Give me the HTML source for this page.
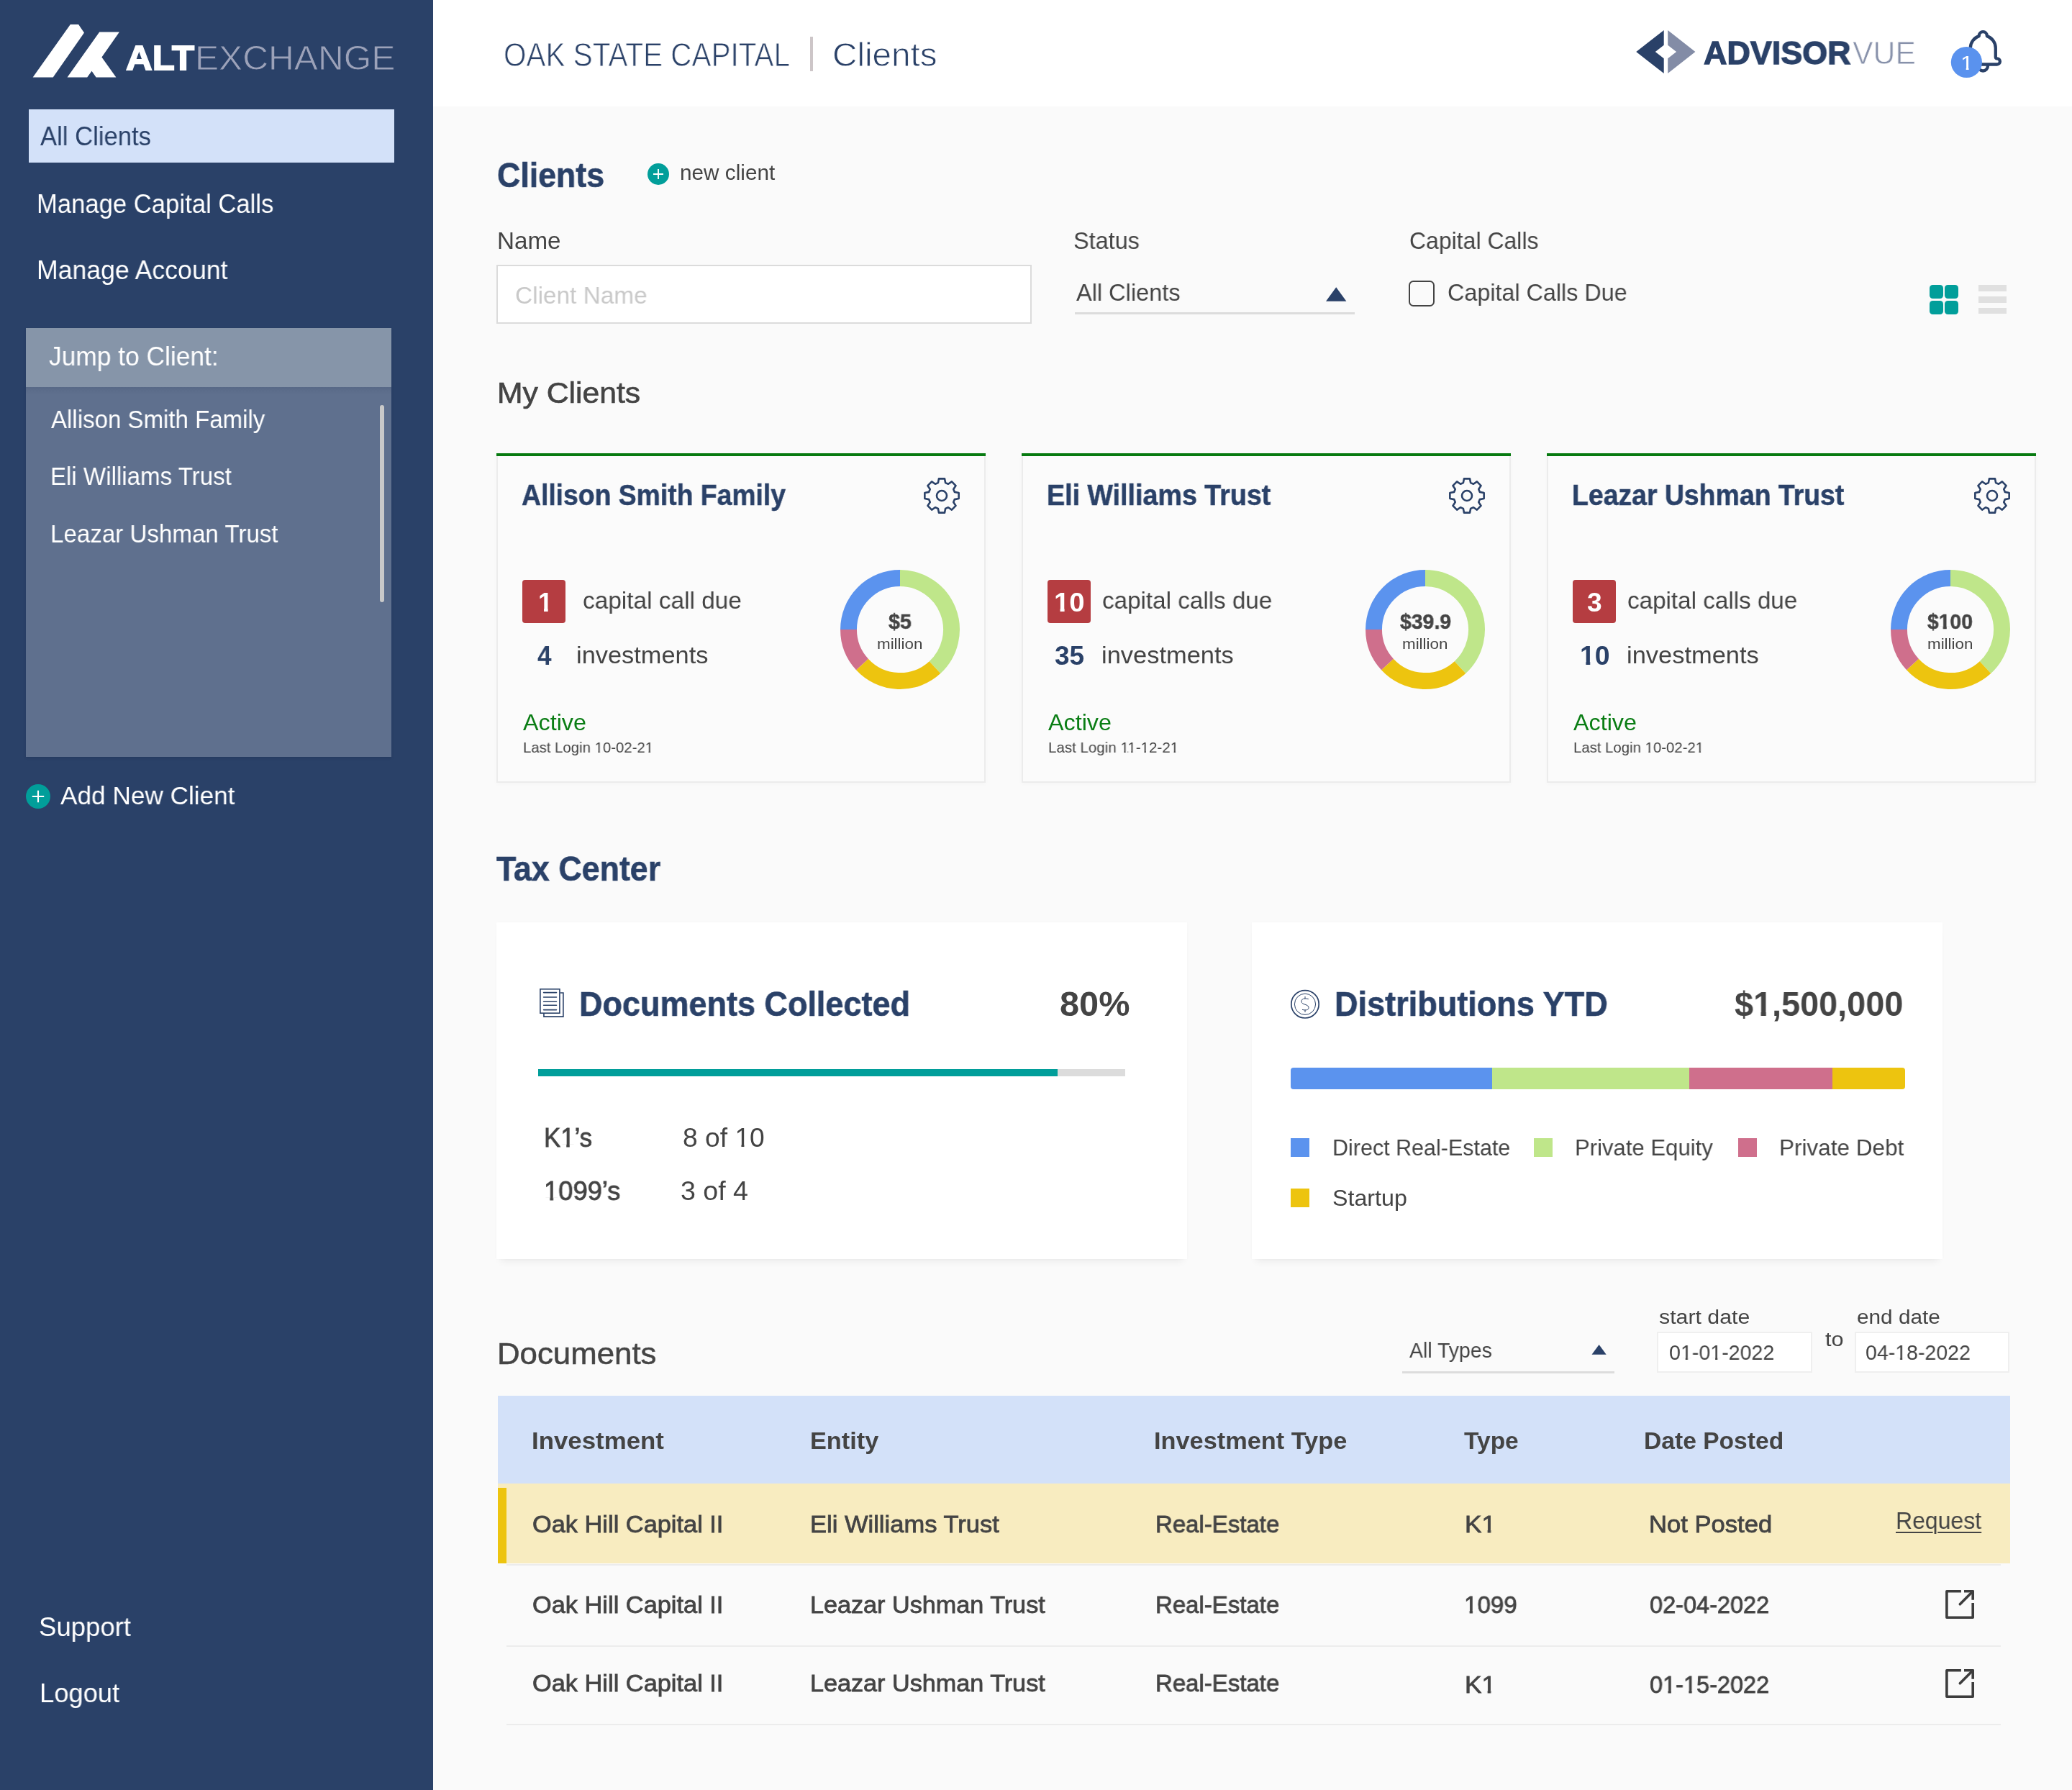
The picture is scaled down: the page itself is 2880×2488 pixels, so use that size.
<!DOCTYPE html>
<html lang="en"><head><meta charset="utf-8"><title>AltExchange AdvisorVue - Clients</title>
<style>
*{margin:0;padding:0;box-sizing:border-box}
html,body{width:2880px;height:2488px;overflow:hidden}
body{position:relative;background:#fafafa;font-family:"Liberation Sans",sans-serif;color:#444}
body div,body svg,.t{position:absolute}
.t{white-space:nowrap;line-height:1;transform-origin:0 0;display:block;will-change:transform}
</style></head>
<body>
<div style="left:0px;top:0px;width:602px;height:2488px;background:#2a4168;"></div>
<div style="left:602px;top:0px;width:2278px;height:148px;background:#ffffff;"></div>
<svg style="left:0;top:0" width="602" height="130" viewBox="0 0 602 130"><polygon fill="#fff" points="45.6,107.6 97.8,34.1 109.1,34.1 117,45.4 73.7,107.6"/><polygon fill="#fff" points="93.5,107.6 138.2,44.4 165.9,44.4 141.4,79.6 161.4,107.6 133.6,107.6 127.5,98.8 121.2,107.6"/></svg>
<div style="left:40px;top:152px;width:508px;height:74px;background:#d3e1f9;"></div>
<div style="left:36px;top:456px;width:508px;height:595.8px;background:transparent;box-shadow:0 2px 4px rgba(10,20,45,.11)"></div>
<div style="left:36px;top:456px;width:508px;height:82px;background:#8695a9;"></div>
<div style="left:36px;top:538px;width:508px;height:513.8px;background:#5f708e;"></div>
<div style="left:36px;top:538px;width:508px;height:10px;background:transparent;background:linear-gradient(rgba(40,55,85,.12),rgba(40,55,85,0))"></div>
<div style="left:528px;top:563px;width:6px;height:274px;background:#c9c9c9;border-radius:3px"></div>
<svg style="left:36px;top:1090px" width="34" height="34" viewBox="0 0 34 34"><circle cx="17" cy="17" r="17" fill="#019e9a"/><path d="M17 8.8V25.2M8.8 17H25.2" stroke="#fff" stroke-width="2.1" fill="none"/></svg>
<div style="left:1126px;top:51px;width:4px;height:48px;background:#cdc6c8;"></div>
<svg style="left:2270px;top:38px" width="92" height="68" viewBox="2270 38 92 68"><polygon fill="#2a4168" points="2274.2,72 2312.7,41.9 2312.7,62.7 2300.8,72 2312.7,81.3 2312.7,102.1"/><polygon fill="#838ca6" points="2318.2,41.9 2356.4,72 2318.2,102.1 2318.2,81.3 2330.1,72 2318.2,62.7"/></svg>
<svg style="left:2700px;top:30px" width="100" height="90" viewBox="2700 30 100 90"><g fill="none" stroke="#2a4168" stroke-width="4.3" stroke-linejoin="round" stroke-linecap="round"><path d="M2738.8,79 V66.7 A17.5,17.5 0 0 1 2750.8,50.1 V49.6 A5.5,5.5 0 0 1 2761.8,49.6 V50.1 A17.5,17.5 0 0 1 2773.8,66.7 V79 Q2773.8,81.3 2775.8,81.3 A4.1,4.1 0 0 1 2775.8,89.5 H2736.8 A4.1,4.1 0 0 1 2736.8,81.3 Q2738.8,81.3 2738.8,79 Z"/><path d="M2749.7,91.9 A6.6,6.6 0 0 0 2762.9,91.9"/></g><circle cx="2733.4" cy="86.5" r="21.6" fill="#5a92ee"/></svg>
<svg style="left:900px;top:226.5px" width="30" height="30" viewBox="0 0 30 30"><circle cx="15" cy="15" r="15" fill="#019e9a"/><path d="M15 8V22M8 15H22" stroke="#fff" stroke-width="1.9" fill="none"/></svg>
<div style="left:690px;top:368px;width:744px;height:82px;background:#ffffff;border:2px solid #dbdbdb"></div>
<div style="left:1494px;top:434px;width:389px;height:3px;background:#dcdcdc;"></div>
<svg style="left:1840px;top:396px" width="36" height="26" viewBox="1840 396 36 26"><polygon fill="#2a4168" points="1843,418.8 1871.4,418.8 1857.2,399.3"/></svg>
<div style="left:1958.2px;top:390.2px;width:35.5px;height:35.5px;background:transparent;border:2.1px solid #444;border-radius:6.5px"></div>
<div style="left:2682px;top:396px;width:19px;height:19px;background:#019e9a;border-radius:4.5px"></div>
<div style="left:2703.3px;top:396px;width:19px;height:19px;background:#019e9a;border-radius:4.5px"></div>
<div style="left:2682px;top:417.6px;width:19px;height:19px;background:#019e9a;border-radius:4.5px"></div>
<div style="left:2703.3px;top:417.6px;width:19px;height:19px;background:#019e9a;border-radius:4.5px"></div>
<div style="left:2749.6px;top:396.4px;width:39.8px;height:8.8px;background:#e0e0e0;"></div>
<div style="left:2749.6px;top:412px;width:39.8px;height:8.8px;background:#e0e0e0;"></div>
<div style="left:2749.6px;top:427.7px;width:39.8px;height:8.8px;background:#e0e0e0;"></div>
<div style="left:690px;top:632px;width:680px;height:456px;background:#fbfbfb;border:2px solid #ececec;box-shadow:0 2px 6px rgba(0,0,0,.025)"></div>
<div style="left:690px;top:630px;width:680px;height:4.4px;background:#077a10;"></div>
<svg style="left:1279px;top:659px" width="60" height="60" viewBox="1279 659 60 60"><g fill="none" stroke="#2a4168" stroke-width="2.6" stroke-linejoin="round"><polygon points="1303.90,671.11 1305.00,665.34 1313.00,665.34 1314.10,671.11 1318.05,672.75 1322.90,669.44 1328.56,675.10 1325.25,679.95 1326.89,683.90 1332.66,685.00 1332.66,693.00 1326.89,694.10 1325.25,698.05 1328.56,702.90 1322.90,708.56 1318.05,705.25 1314.10,706.89 1313.00,712.66 1305.00,712.66 1303.90,706.89 1299.95,705.25 1295.10,708.56 1289.44,702.90 1292.75,698.05 1291.11,694.10 1285.34,693.00 1285.34,685.00 1291.11,683.90 1292.75,679.95 1289.44,675.10 1295.10,669.44 1299.95,672.75"/><circle cx="1309" cy="689" r="7"/></g></svg>
<div style="left:726px;top:806px;width:60px;height:60px;background:#b53d41;border-radius:4px"></div>
<svg style="left:1161px;top:784.8px" width="180" height="180" viewBox="1161 784.8 180 180"><path d="M1251.00,803.30 A71.5,71.5 0 0 1 1299.49,927.35" stroke="#bfe68a" stroke-width="22.9" fill="none"/><path d="M1299.49,927.35 A71.5,71.5 0 0 1 1198.45,923.29" stroke="#edc40f" stroke-width="22.9" fill="none"/><path d="M1198.45,923.29 A71.5,71.5 0 0 1 1179.50,874.80" stroke="#cf6f8c" stroke-width="22.9" fill="none"/><path d="M1179.50,874.80 A71.5,71.5 0 0 1 1251.00,803.30" stroke="#5b93ee" stroke-width="22.9" fill="none"/></svg>
<div style="left:1420px;top:632px;width:680px;height:456px;background:#fbfbfb;border:2px solid #ececec;box-shadow:0 2px 6px rgba(0,0,0,.025)"></div>
<div style="left:1420px;top:630px;width:680px;height:4.4px;background:#077a10;"></div>
<svg style="left:2009px;top:659px" width="60" height="60" viewBox="2009 659 60 60"><g fill="none" stroke="#2a4168" stroke-width="2.6" stroke-linejoin="round"><polygon points="2033.90,671.11 2035.00,665.34 2043.00,665.34 2044.10,671.11 2048.05,672.75 2052.90,669.44 2058.56,675.10 2055.25,679.95 2056.89,683.90 2062.66,685.00 2062.66,693.00 2056.89,694.10 2055.25,698.05 2058.56,702.90 2052.90,708.56 2048.05,705.25 2044.10,706.89 2043.00,712.66 2035.00,712.66 2033.90,706.89 2029.95,705.25 2025.10,708.56 2019.44,702.90 2022.75,698.05 2021.11,694.10 2015.34,693.00 2015.34,685.00 2021.11,683.90 2022.75,679.95 2019.44,675.10 2025.10,669.44 2029.95,672.75"/><circle cx="2039" cy="689" r="7"/></g></svg>
<div style="left:1456px;top:806px;width:60px;height:60px;background:#b53d41;border-radius:4px"></div>
<svg style="left:1891px;top:784.8px" width="180" height="180" viewBox="1891 784.8 180 180"><path d="M1981.00,803.30 A71.5,71.5 0 0 1 2029.49,927.35" stroke="#bfe68a" stroke-width="22.9" fill="none"/><path d="M2029.49,927.35 A71.5,71.5 0 0 1 1928.45,923.29" stroke="#edc40f" stroke-width="22.9" fill="none"/><path d="M1928.45,923.29 A71.5,71.5 0 0 1 1909.50,874.80" stroke="#cf6f8c" stroke-width="22.9" fill="none"/><path d="M1909.50,874.80 A71.5,71.5 0 0 1 1981.00,803.30" stroke="#5b93ee" stroke-width="22.9" fill="none"/></svg>
<div style="left:2150px;top:632px;width:680px;height:456px;background:#fbfbfb;border:2px solid #ececec;box-shadow:0 2px 6px rgba(0,0,0,.025)"></div>
<div style="left:2150px;top:630px;width:680px;height:4.4px;background:#077a10;"></div>
<svg style="left:2739px;top:659px" width="60" height="60" viewBox="2739 659 60 60"><g fill="none" stroke="#2a4168" stroke-width="2.6" stroke-linejoin="round"><polygon points="2763.90,671.11 2765.00,665.34 2773.00,665.34 2774.10,671.11 2778.05,672.75 2782.90,669.44 2788.56,675.10 2785.25,679.95 2786.89,683.90 2792.66,685.00 2792.66,693.00 2786.89,694.10 2785.25,698.05 2788.56,702.90 2782.90,708.56 2778.05,705.25 2774.10,706.89 2773.00,712.66 2765.00,712.66 2763.90,706.89 2759.95,705.25 2755.10,708.56 2749.44,702.90 2752.75,698.05 2751.11,694.10 2745.34,693.00 2745.34,685.00 2751.11,683.90 2752.75,679.95 2749.44,675.10 2755.10,669.44 2759.95,672.75"/><circle cx="2769" cy="689" r="7"/></g></svg>
<div style="left:2186px;top:806px;width:60px;height:60px;background:#b53d41;border-radius:4px"></div>
<svg style="left:2621px;top:784.8px" width="180" height="180" viewBox="2621 784.8 180 180"><path d="M2711.00,803.30 A71.5,71.5 0 0 1 2759.49,927.35" stroke="#bfe68a" stroke-width="22.9" fill="none"/><path d="M2759.49,927.35 A71.5,71.5 0 0 1 2658.45,923.29" stroke="#edc40f" stroke-width="22.9" fill="none"/><path d="M2658.45,923.29 A71.5,71.5 0 0 1 2639.50,874.80" stroke="#cf6f8c" stroke-width="22.9" fill="none"/><path d="M2639.50,874.80 A71.5,71.5 0 0 1 2711.00,803.30" stroke="#5b93ee" stroke-width="22.9" fill="none"/></svg>
<div style="left:690px;top:1282px;width:960px;height:468px;background:#ffffff;box-shadow:0 9px 10px -6px rgba(0,0,0,.065),0 0 4px rgba(0,0,0,.02)"></div>
<div style="left:1740px;top:1282px;width:960px;height:468px;background:#ffffff;box-shadow:0 9px 10px -6px rgba(0,0,0,.065),0 0 4px rgba(0,0,0,.02)"></div>
<svg style="left:745px;top:1370px" width="44" height="48" viewBox="745 1370 44 48"><g fill="none" stroke="#2a4168" stroke-width="1.6"><rect x="750.9" y="1374.8" width="27" height="33.4"/><path d="M778.7,1380 H782.9 V1413.1 H755.95 V1409"/><path stroke-linecap="round" d="M755.6,1379.6H773.5M755.6,1386H773.5M755.6,1392.3H773.5M755.6,1397.2H773.5M755.6,1403.6H773.5"/></g></svg>
<div style="left:747.8px;top:1485.8px;width:816.2px;height:10px;background:#dcdcdc;"></div>
<div style="left:747.8px;top:1485.8px;width:721.8px;height:10px;background:#019e9a;"></div>
<svg style="left:1790px;top:1372px" width="48" height="48" viewBox="1790 1372 48 48"><g fill="none" stroke="#2a4168"><circle cx="1814" cy="1395.8" r="19.2" stroke-width="1.7"/><circle cx="1814" cy="1395.8" r="14.6" stroke-width="1"/><path stroke-width="1" d="M1814,1385V1388.3M1814,1403.6V1407M1818.8,1388.6C1812,1387 1809,1388.8 1809,1391.8C1809,1394.6 1811.5,1395.4 1814,1396.2C1817,1397.2 1819,1398.3 1819,1400.6C1819,1403.8 1815.5,1404.6 1810,1403.4"/></g></svg>
<div style="left:1794px;top:1484px;width:854px;height:29.5px;border-radius:4px;overflow:hidden;background:linear-gradient(90deg,#5b93ee 0,#5b93ee 280px,#bfe68a 280px,#bfe68a 553.5px,#cf6f8c 553.5px,#cf6f8c 753px,#edc40f 753px)"></div>
<div style="left:1794px;top:1581.8px;width:26px;height:26px;background:#5b93ee;"></div>
<div style="left:2132px;top:1581.8px;width:26px;height:26px;background:#bfe68a;"></div>
<div style="left:2416px;top:1581.8px;width:26px;height:26px;background:#cf6f8c;"></div>
<div style="left:1794px;top:1652px;width:26px;height:26px;background:#edc40f;"></div>
<div style="left:1949px;top:1906.3px;width:295px;height:2.8px;background:#dcdcdc;"></div>
<svg style="left:2208px;top:1864px" width="30" height="24" viewBox="2208 1864 30 24"><polygon fill="#2a4168" points="2212.5,1882.8 2232.7,1882.8 2222.6,1868.9"/></svg>
<div style="left:2303.4px;top:1851.4px;width:215.6px;height:57px;background:#ffffff;border:2px solid #efefef"></div>
<div style="left:2577.8px;top:1851.4px;width:215.6px;height:57px;background:#ffffff;border:2px solid #efefef"></div>
<div style="left:692px;top:1940px;width:2102px;height:122px;background:#d3e1f9;"></div>
<div style="left:692px;top:2062px;width:2102px;height:111px;background:#f8ecc0;"></div>
<div style="left:692px;top:2068px;width:12px;height:105px;background:#edc40f;"></div>
<div style="left:704px;top:2174px;width:2077px;height:2px;background:#ececec;"></div>
<div style="left:704px;top:2286.6px;width:2077px;height:2px;background:#ececec;"></div>
<div style="left:704px;top:2396.3px;width:2077px;height:2px;background:#ececec;"></div>
<svg style="left:2700px;top:2205.9px" width="48" height="48" viewBox="2700 2205.9 48 48"><g fill="none" stroke="#3d3d3d" stroke-width="3.6"><path stroke-linejoin="round" d="M2725.9,2211.7000000000003H2705.9V2248.1H2742.2V2227.9"/><path stroke-linejoin="round" d="M2730,2211.7000000000003H2742.2V2223.7000000000003"/><path stroke-linecap="round" d="M2742.2,2211.7000000000003L2724.3,2229.7000000000003"/></g></svg>
<svg style="left:2700px;top:2315.5px" width="48" height="48" viewBox="2700 2315.5 48 48"><g fill="none" stroke="#3d3d3d" stroke-width="3.6"><path stroke-linejoin="round" d="M2725.9,2321.3H2705.9V2357.7H2742.2V2337.5"/><path stroke-linejoin="round" d="M2730,2321.3H2742.2V2333.3"/><path stroke-linecap="round" d="M2742.2,2321.3L2724.3,2339.3"/></g></svg>
<span class="t" style="left:174.55px;top:55.90px;font-size:49px;color:#ffffff;font-weight:700;-webkit-text-stroke:1.8px #ffffff;transform:scale(1.0369,1);">ALT</span>
<span class="t" style="left:271.35px;top:55.90px;font-size:49px;color:#9ca2b9;-webkit-text-stroke:0.8px #2a4168;transform:scale(1.0122,1);">EXCHANGE</span>
<span class="t" style="left:55.60px;top:171.80px;font-size:36px;color:#2a4168;transform:scale(0.9620,1);">All Clients</span>
<span class="t" style="left:50.67px;top:266.00px;font-size:36px;color:#ffffff;transform:scale(0.9623,1);">Manage Capital Calls</span>
<span class="t" style="left:50.61px;top:358.40px;font-size:36px;color:#ffffff;transform:scale(0.9898,1);">Manage Account</span>
<span class="t" style="left:67.60px;top:478.30px;font-size:36px;color:#ffffff;transform:scale(0.9819,1);">Jump to Client:</span>
<span class="t" style="left:70.60px;top:564.50px;font-size:35px;color:#ffffff;transform:scale(0.9437,1);">Allison Smith Family</span>
<span class="t" style="left:69.71px;top:644.30px;font-size:35px;color:#ffffff;transform:scale(0.9453,1);">Eli Williams Trust</span>
<span class="t" style="left:69.71px;top:724.40px;font-size:35px;color:#ffffff;transform:scale(0.9463,1);">Leazar Ushman Trust</span>
<span class="t" style="left:84.00px;top:1088.90px;font-size:35.6px;color:#ffffff;transform:scale(0.9889,1);">Add New Client</span>
<span class="t" style="left:54.40px;top:2244.20px;font-size:36.7px;color:#ffffff;transform:scale(0.9961,1);">Support</span>
<span class="t" style="left:54.83px;top:2336.10px;font-size:36.7px;color:#ffffff;transform:scale(0.9907,1);">Logout</span>
<span class="t" style="left:700.08px;top:51.80px;font-size:47px;color:#2a4168;-webkit-text-stroke:0.9px #ffffff;transform:scale(0.8608,1);">OAK STATE CAPITAL</span>
<span class="t" style="left:1157.17px;top:51.80px;font-size:47px;color:#2a4168;-webkit-text-stroke:0.9px #ffffff;transform:scale(1.0132,1);">Clients</span>
<span class="t" style="left:2368.00px;top:51.30px;font-size:45px;color:#2a4168;font-weight:700;-webkit-text-stroke:1.3px #2a4168;transform:scale(0.9975,1);">ADVISOR</span>
<span class="t" style="left:2574.60px;top:51.30px;font-size:45px;color:#8791aa;-webkit-text-stroke:0.8px #ffffff;transform:scale(0.9507,1);">VUE</span>
<span class="t" style="left:2725.00px;top:74.90px;font-size:27px;color:#ffffff;clip-path:polygon(-4.00px -4.00px,19.03px -4.00px,19.03px 29.00px,15.02px 29.00px,15.02px 19.48px,9.53px 19.48px,9.53px 29.00px,6.44px 29.00px,6.44px 19.48px,0.00px 19.48px,0.00px 29.00px,-4.00px 29.00px);transform:scale(1.2000,1);">1</span>
<span class="t" style="left:690.96px;top:219.40px;font-size:48.7px;color:#2a4168;font-weight:700;-webkit-text-stroke:0.7px #2a4168;transform:scale(0.9181,1);">Clients</span>
<span class="t" style="left:945.36px;top:225.70px;font-size:28.8px;color:#444444;transform:scale(1.0327,1);">new client</span>
<span class="t" style="left:690.59px;top:317.70px;font-size:33px;color:#444444;transform:scale(1.0063,1);">Name</span>
<span class="t" style="left:715.60px;top:394.00px;font-size:33.5px;color:#c9c9c9;transform:scale(0.9963,1);">Client Name</span>
<span class="t" style="left:1491.82px;top:318.20px;font-size:33px;color:#444444;transform:scale(0.9821,1);">Status</span>
<span class="t" style="left:1496.40px;top:390.20px;font-size:33.2px;color:#444444;transform:scale(0.9799,1);">All Clients</span>
<span class="t" style="left:1958.83px;top:318.00px;font-size:33px;color:#444444;transform:scale(0.9688,1);">Capital Calls</span>
<span class="t" style="left:2012.43px;top:389.80px;font-size:33.2px;color:#444444;transform:scale(0.9735,1);">Capital Calls Due</span>
<span class="t" style="left:690.70px;top:525.70px;font-size:41.3px;color:#444444;-webkit-text-stroke:0.7px #444444;transform:scale(1.0333,1);">My Clients</span>
<span class="t" style="left:724.88px;top:668.00px;font-size:40.4px;color:#2a4168;font-weight:700;-webkit-text-stroke:0.5px #2a4168;transform:scale(0.9239,1);">Allison Smith Family</span>
<span class="t" style="left:747.60px;top:819.60px;font-size:36px;color:#ffffff;font-weight:700;clip-path:polygon(-4.00px -4.00px,24.03px -4.00px,24.03px 38.00px,20.02px 38.00px,20.02px 25.83px,13.69px 25.83px,13.69px 38.00px,8.05px 38.00px,8.05px 25.83px,0.00px 25.83px,0.00px 38.00px,-4.00px 38.00px);">1</span>
<span class="t" style="left:810.02px;top:816.70px;font-size:34px;color:#444444;transform:scale(0.9820,1);">capital call due</span>
<span class="t" style="left:747.18px;top:892.80px;font-size:37px;color:#2a4168;font-weight:700;transform:scale(0.9439,1);">4</span>
<span class="t" style="left:800.58px;top:893.00px;font-size:34px;color:#444444;transform:scale(1.0112,1);">investments</span>
<span class="t" style="left:1235.21px;top:849.00px;font-size:29.3px;color:#444444;font-weight:700;-webkit-text-stroke:0.5px #444444;transform:scale(0.9789,1);">$5</span>
<span class="t" style="left:1219.14px;top:883.80px;font-size:21px;color:#444444;transform:scale(1.0652,1);">million</span>
<span class="t" style="left:726.60px;top:989.00px;font-size:31.5px;color:#0a7d14;transform:scale(1.0251,1);">Active</span>
<span class="t" style="left:726.62px;top:1029.00px;font-size:20.7px;color:#444444;clip-path:polygon(-4.00px -4.00px,188.03px -4.00px,188.03px 22.70px,184.03px 22.70px,184.03px 14.95px,179.90px 14.95px,179.90px 22.70px,177.37px 22.70px,177.37px 14.95px,172.51px 14.95px,172.51px 22.70px,112.72px 22.70px,112.72px 14.95px,108.59px 14.95px,108.59px 22.70px,106.06px 22.70px,106.06px 14.95px,101.21px 14.95px,101.21px 22.70px,-4.00px 22.70px);transform:scale(0.9842,1);">Last Login 10-02-21</span>
<span class="t" style="left:1455.14px;top:668.00px;font-size:40.4px;color:#2a4168;font-weight:700;-webkit-text-stroke:0.5px #2a4168;transform:scale(0.9318,1);">Eli Williams Trust</span>
<span class="t" style="left:1465.08px;top:819.60px;font-size:36px;color:#ffffff;font-weight:700;clip-path:polygon(-4.00px -4.00px,44.05px -4.00px,44.05px 38.00px,20.02px 38.00px,20.02px 25.83px,13.69px 25.83px,13.69px 38.00px,8.05px 38.00px,8.05px 25.83px,0.00px 25.83px,0.00px 38.00px,-4.00px 38.00px);transform:scale(1.0645,1);">10</span>
<span class="t" style="left:1531.62px;top:816.70px;font-size:34px;color:#444444;transform:scale(0.9766,1);">capital calls due</span>
<span class="t" style="left:1466.17px;top:892.80px;font-size:37px;color:#2a4168;font-weight:700;transform:scale(0.9968,1);">35</span>
<span class="t" style="left:1530.57px;top:893.00px;font-size:34px;color:#444444;transform:scale(1.0134,1);">investments</span>
<span class="t" style="left:1945.60px;top:849.00px;font-size:29.3px;color:#444444;font-weight:700;-webkit-text-stroke:0.5px #444444;transform:scale(0.9697,1);">$39.9</span>
<span class="t" style="left:1949.14px;top:883.80px;font-size:21px;color:#444444;transform:scale(1.0652,1);">million</span>
<span class="t" style="left:1456.60px;top:989.00px;font-size:31.5px;color:#0a7d14;transform:scale(1.0251,1);">Active</span>
<span class="t" style="left:1456.61px;top:1029.00px;font-size:20.7px;color:#444444;clip-path:polygon(-4.00px -4.00px,186.50px -4.00px,186.50px 22.70px,182.49px 22.70px,182.49px 14.95px,178.36px 14.95px,178.36px 22.70px,175.83px 22.70px,175.83px 14.95px,170.98px 14.95px,170.98px 22.70px,141.08px 22.70px,141.08px 14.95px,136.96px 14.95px,136.96px 22.70px,134.43px 22.70px,134.43px 14.95px,129.57px 14.95px,129.57px 22.70px,122.69px 22.70px,122.69px 14.95px,118.56px 14.95px,118.56px 22.70px,116.03px 22.70px,116.03px 14.95px,111.18px 14.95px,111.18px 22.70px,112.72px 22.70px,112.72px 14.95px,108.59px 14.95px,108.59px 22.70px,106.06px 22.70px,106.06px 14.95px,101.21px 14.95px,101.21px 22.70px,-4.00px 22.70px);transform:scale(0.9926,1);">Last Login 11-12-21</span>
<span class="t" style="left:2185.15px;top:668.00px;font-size:40.4px;color:#2a4168;font-weight:700;-webkit-text-stroke:0.5px #2a4168;transform:scale(0.9260,1);">Leazar Ushman Trust</span>
<span class="t" style="left:2206.15px;top:819.60px;font-size:36px;color:#ffffff;font-weight:700;transform:scale(1.0335,1);">3</span>
<span class="t" style="left:2261.62px;top:816.70px;font-size:34px;color:#444444;transform:scale(0.9766,1);">capital calls due</span>
<span class="t" style="left:2195.58px;top:892.80px;font-size:37px;color:#2a4168;font-weight:700;clip-path:polygon(-4.00px -4.00px,45.16px -4.00px,45.16px 39.00px,20.58px 39.00px,20.58px 26.72px,14.06px 26.72px,14.06px 39.00px,8.29px 39.00px,8.29px 26.72px,0.00px 26.72px,0.00px 39.00px,-4.00px 39.00px);transform:scale(1.0113,1);">10</span>
<span class="t" style="left:2260.57px;top:893.00px;font-size:34px;color:#444444;transform:scale(1.0134,1);">investments</span>
<span class="t" style="left:2679.20px;top:849.00px;font-size:29.3px;color:#444444;font-weight:700;-webkit-text-stroke:0.5px #444444;clip-path:polygon(-4.00px -4.00px,69.19px -4.00px,69.19px 31.30px,32.59px 31.30px,32.59px 21.26px,27.75px 21.26px,27.75px 31.30px,22.53px 31.30px,22.53px 21.26px,16.29px 21.26px,16.29px 31.30px,-4.00px 31.30px);transform:scale(0.9649,1);">$100</span>
<span class="t" style="left:2679.14px;top:883.80px;font-size:21px;color:#444444;transform:scale(1.0652,1);">million</span>
<span class="t" style="left:2186.60px;top:989.00px;font-size:31.5px;color:#0a7d14;transform:scale(1.0251,1);">Active</span>
<span class="t" style="left:2186.62px;top:1029.00px;font-size:20.7px;color:#444444;clip-path:polygon(-4.00px -4.00px,188.03px -4.00px,188.03px 22.70px,184.03px 22.70px,184.03px 14.95px,179.90px 14.95px,179.90px 22.70px,177.37px 22.70px,177.37px 14.95px,172.51px 14.95px,172.51px 22.70px,112.72px 22.70px,112.72px 14.95px,108.59px 14.95px,108.59px 22.70px,106.06px 22.70px,106.06px 14.95px,101.21px 14.95px,101.21px 22.70px,-4.00px 22.70px);transform:scale(0.9842,1);">Last Login 10-02-21</span>
<span class="t" style="left:690.00px;top:1183.30px;font-size:48.6px;color:#2a4168;font-weight:700;-webkit-text-stroke:0.6px #2a4168;transform:scale(0.9215,1);">Tax Center</span>
<span class="t" style="left:804.96px;top:1371.80px;font-size:47.5px;color:#2a4168;font-weight:700;-webkit-text-stroke:0.6px #2a4168;transform:scale(0.9470,1);">Documents Collected</span>
<span class="t" style="left:1473.38px;top:1371.80px;font-size:47.7px;color:#444444;font-weight:700;transform:scale(1.0210,1);">80%</span>
<span class="t" style="left:756.37px;top:1563.20px;font-size:37px;color:#444444;-webkit-text-stroke:0.8px #444444;clip-path:polygon(-4.00px -4.00px,75.31px -4.00px,75.31px 39.00px,45.26px 39.00px,45.26px 27.34px,38.00px 27.34px,38.00px 39.00px,33.23px 39.00px,33.23px 27.34px,24.68px 27.34px,24.68px 39.00px,-4.00px 39.00px);transform:scale(0.9410,1);">K1’s</span>
<span class="t" style="left:948.79px;top:1563.20px;font-size:37px;color:#444444;clip-path:polygon(-4.00px -4.00px,117.16px -4.00px,117.16px 39.00px,92.57px 39.00px,92.57px 27.74px,84.92px 27.74px,84.92px 39.00px,80.95px 39.00px,80.95px 27.74px,71.99px 27.74px,71.99px 39.00px,-4.00px 39.00px);transform:scale(1.0057,1);">8 of 10</span>
<span class="t" style="left:756.42px;top:1636.70px;font-size:37px;color:#444444;-webkit-text-stroke:0.8px #444444;clip-path:polygon(-4.00px -4.00px,112.38px -4.00px,112.38px 39.00px,20.58px 39.00px,20.58px 27.34px,13.32px 27.34px,13.32px 39.00px,8.55px 39.00px,8.55px 27.34px,0.00px 27.34px,0.00px 39.00px,-4.00px 39.00px);transform:scale(0.9826,1);">1099’s</span>
<span class="t" style="left:946.39px;top:1636.70px;font-size:37px;color:#444444;transform:scale(1.0155,1);">3 of 4</span>
<span class="t" style="left:1854.95px;top:1371.60px;font-size:47.5px;color:#2a4168;font-weight:700;-webkit-text-stroke:0.6px #2a4168;transform:scale(0.9486,1);">Distributions YTD</span>
<span class="t" style="left:2411.20px;top:1371.80px;font-size:47.7px;color:#444444;font-weight:700;clip-path:polygon(-4.00px -4.00px,242.67px -4.00px,242.67px 49.70px,53.04px 49.70px,53.04px 34.63px,44.54px 34.63px,44.54px 49.70px,37.30px 49.70px,37.30px 34.63px,26.51px 34.63px,26.51px 49.70px,-4.00px 49.70px);transform:scale(0.9817,1);">$1,500,000</span>
<span class="t" style="left:1851.69px;top:1579.20px;font-size:32px;color:#444444;transform:scale(0.9523,1);">Direct Real-Estate</span>
<span class="t" style="left:2188.66px;top:1579.20px;font-size:32px;color:#444444;transform:scale(0.9712,1);">Private Equity</span>
<span class="t" style="left:2473.03px;top:1579.20px;font-size:32px;color:#444444;transform:scale(0.9840,1);">Private Debt</span>
<span class="t" style="left:1851.99px;top:1649.40px;font-size:32px;color:#444444;transform:scale(1.0062,1);">Startup</span>
<span class="t" style="left:691.25px;top:1860.70px;font-size:41.7px;color:#444444;-webkit-text-stroke:0.5px #444444;transform:scale(1.0503,1);">Documents</span>
<span class="t" style="left:1959.20px;top:1861.80px;font-size:29.5px;color:#444444;transform:scale(0.9636,1);">All Types</span>
<span class="t" style="left:2305.59px;top:1817.60px;font-size:27px;color:#444444;transform:scale(1.1225,1);">start date</span>
<span class="t" style="left:2580.50px;top:1817.60px;font-size:27px;color:#444444;transform:scale(1.1020,1);">end date</span>
<span class="t" style="left:2537.00px;top:1848.90px;font-size:27px;color:#444444;transform:scale(1.1355,1);">to</span>
<span class="t" style="left:2320.21px;top:1866.40px;font-size:29px;color:#444444;clip-path:polygon(-4.00px -4.00px,152.34px -4.00px,152.34px 31.00px,74.17px 31.00px,74.17px 21.33px,68.25px 21.33px,68.25px 31.00px,64.98px 31.00px,64.98px 21.33px,58.04px 21.33px,58.04px 31.00px,32.26px 31.00px,32.26px 21.33px,26.33px 21.33px,26.33px 31.00px,23.07px 31.00px,23.07px 21.33px,16.13px 21.33px,16.13px 31.00px,-4.00px 31.00px);transform:scale(0.9863,1);">01-01-2022</span>
<span class="t" style="left:2593.42px;top:1866.40px;font-size:29px;color:#444444;clip-path:polygon(-4.00px -4.00px,152.34px -4.00px,152.34px 31.00px,58.04px 31.00px,58.04px 21.33px,52.12px 21.33px,52.12px 31.00px,48.86px 31.00px,48.86px 21.33px,41.91px 21.33px,41.91px 31.00px,-4.00px 31.00px);transform:scale(0.9835,1);">04-18-2022</span>
<span class="t" style="left:739.49px;top:1986.00px;font-size:33px;color:#444444;font-weight:700;transform:scale(1.0556,1);">Investment</span>
<span class="t" style="left:1126.13px;top:1986.00px;font-size:33px;color:#444444;font-weight:700;transform:scale(1.0387,1);">Entity</span>
<span class="t" style="left:1604.12px;top:1986.00px;font-size:33px;color:#444444;font-weight:700;transform:scale(1.0399,1);">Investment Type</span>
<span class="t" style="left:2034.80px;top:1986.00px;font-size:33px;color:#444444;font-weight:700;transform:scale(1.0160,1);">Type</span>
<span class="t" style="left:2285.36px;top:1986.00px;font-size:33px;color:#444444;font-weight:700;transform:scale(1.0184,1);">Date Posted</span>
<span class="t" style="left:740.18px;top:2102.10px;font-size:33.5px;color:#444444;-webkit-text-stroke:0.8px #444444;transform:scale(1.0256,1);">Oak Hill Capital II</span>
<span class="t" style="left:1126.14px;top:2102.10px;font-size:33.5px;color:#444444;-webkit-text-stroke:0.8px #444444;transform:scale(1.0304,1);">Eli Williams Trust</span>
<span class="t" style="left:1605.83px;top:2102.10px;font-size:33.5px;color:#444444;-webkit-text-stroke:0.8px #444444;transform:scale(0.9838,1);">Real-Estate</span>
<span class="t" style="left:2035.83px;top:2102.10px;font-size:33.5px;color:#444444;-webkit-text-stroke:0.8px #444444;clip-path:polygon(-4.00px -4.00px,44.98px -4.00px,44.98px 35.50px,40.98px 35.50px,40.98px 24.60px,34.48px 24.60px,34.48px 35.50px,30.02px 35.50px,30.02px 24.60px,22.34px 24.60px,22.34px 35.50px,-4.00px 35.50px);transform:scale(1.0524,1);">K1</span>
<span class="t" style="left:2291.74px;top:2102.10px;font-size:33.5px;color:#444444;-webkit-text-stroke:0.8px #444444;transform:scale(1.0327,1);">Not Posted</span>
<span class="t" style="left:740.18px;top:2214.30px;font-size:33.5px;color:#444444;-webkit-text-stroke:0.8px #444444;transform:scale(1.0256,1);">Oak Hill Capital II</span>
<span class="t" style="left:1126.16px;top:2214.30px;font-size:33.5px;color:#444444;-webkit-text-stroke:0.8px #444444;transform:scale(1.0202,1);">Leazar Ushman Trust</span>
<span class="t" style="left:1605.83px;top:2214.30px;font-size:33.5px;color:#444444;-webkit-text-stroke:0.8px #444444;transform:scale(0.9838,1);">Real-Estate</span>
<span class="t" style="left:2035.01px;top:2214.30px;font-size:33.5px;color:#444444;-webkit-text-stroke:0.8px #444444;clip-path:polygon(-4.00px -4.00px,78.53px -4.00px,78.53px 35.50px,18.63px 35.50px,18.63px 24.60px,12.13px 24.60px,12.13px 35.50px,7.67px 35.50px,7.67px 24.60px,0.00px 24.60px,0.00px 35.50px,-4.00px 35.50px);transform:scale(0.9877,1);">1099</span>
<span class="t" style="left:2292.63px;top:2214.30px;font-size:33.5px;color:#444444;-webkit-text-stroke:0.8px #444444;transform:scale(0.9696,1);">02-04-2022</span>
<span class="t" style="left:740.18px;top:2322.80px;font-size:33.5px;color:#444444;-webkit-text-stroke:0.8px #444444;transform:scale(1.0256,1);">Oak Hill Capital II</span>
<span class="t" style="left:1126.16px;top:2322.80px;font-size:33.5px;color:#444444;-webkit-text-stroke:0.8px #444444;transform:scale(1.0202,1);">Leazar Ushman Trust</span>
<span class="t" style="left:1605.83px;top:2322.80px;font-size:33.5px;color:#444444;-webkit-text-stroke:0.8px #444444;transform:scale(0.9838,1);">Real-Estate</span>
<span class="t" style="left:2035.83px;top:2324.90px;font-size:33.5px;color:#444444;-webkit-text-stroke:0.8px #444444;clip-path:polygon(-4.00px -4.00px,44.98px -4.00px,44.98px 35.50px,40.98px 35.50px,40.98px 24.60px,34.48px 24.60px,34.48px 35.50px,30.02px 35.50px,30.02px 24.60px,22.34px 24.60px,22.34px 35.50px,-4.00px 35.50px);transform:scale(1.0524,1);">K1</span>
<span class="t" style="left:2292.63px;top:2324.90px;font-size:33.5px;color:#444444;-webkit-text-stroke:0.8px #444444;clip-path:polygon(-4.00px -4.00px,175.38px -4.00px,175.38px 35.50px,67.05px 35.50px,67.05px 24.60px,60.55px 24.60px,60.55px 35.50px,56.09px 35.50px,56.09px 24.60px,48.42px 24.60px,48.42px 35.50px,37.26px 35.50px,37.26px 24.60px,30.77px 24.60px,30.77px 35.50px,26.31px 35.50px,26.31px 24.60px,18.63px 24.60px,18.63px 35.50px,-4.00px 35.50px);transform:scale(0.9696,1);">01-15-2022</span>
<span class="t" style="left:2635.46px;top:2097.20px;font-size:33.5px;color:#444444;text-decoration:underline;text-decoration-thickness:1.6px;text-underline-offset:3.5px;transform:scale(0.9543,1);">Request</span>
</body></html>
